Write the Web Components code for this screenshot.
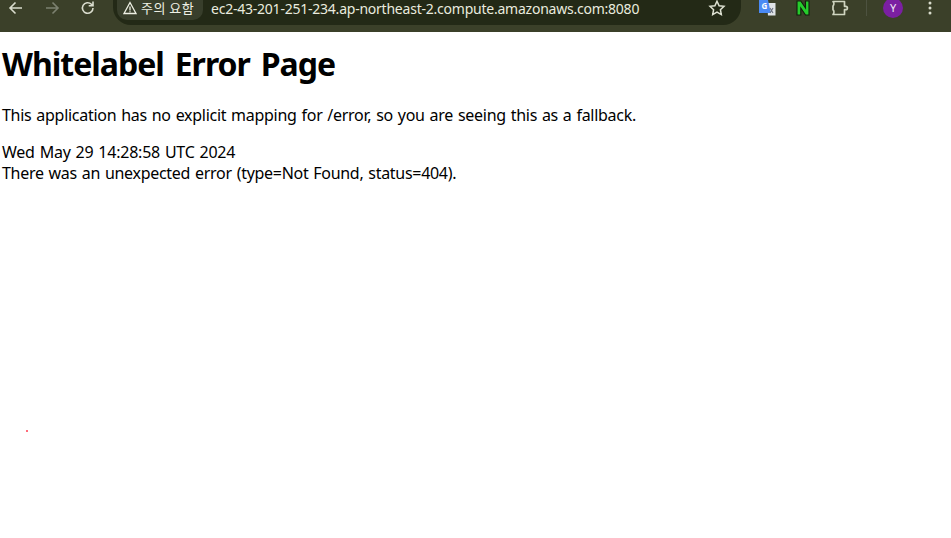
<!DOCTYPE html>
<html lang="en">
<head>
<meta charset="utf-8">
<title>Whitelabel Error Page</title>
<style>
  html, body { margin: 0; padding: 0; background: #fff; }
  body { width: 951px; height: 538px; overflow: hidden; font-family: "Noto Sans", "Noto Sans CJK KR", sans-serif; }
</style>
</head>
<body>
<browser-toolbar url="ec2-43-201-251-234.ap-northeast-2.compute.amazonaws.com:8080" warning="주의 요함"></browser-toolbar>
<error-page>
  <span slot="title">Whitelabel Error Page</span>
  <span slot="lead">This application has no explicit mapping for /error, so you are seeing this as a fallback.</span>
  <span slot="time">Wed May 29 14:28:58 UTC 2024</span>
  <span slot="detail">There was an unexpected error (type=Not Found, status=404).</span>
</error-page>
<script>
class BrowserToolbar extends HTMLElement{
  constructor(){
    super();
    this.attachShadow({mode:'open'})
    const url = this.getAttribute('url')
    const warning = this.getAttribute('warning')
    this.shadowRoot.innerHTML = `
    <style>
      :host { display: block; height: 32px; background: #3b4029; color: #e6e8dc; overflow: hidden; }
      .bar { display: flex; align-items: flex-start; height: 32px; }
      .nav { display: flex; width: 113px; padding-left: 7px; box-sizing: border-box; gap: 18px; }
      .nav svg { width: 18px; height: 16px; display: block; }
      .omni {
        width: 628px; height: 25px; background: #232916; border-radius: 0 0 18px 18px;
        display: flex; align-items: flex-start; box-sizing: border-box; padding-left: 4px;
        font: 14px "Noto Sans", sans-serif;
      }
      .chip {
        height: 20px; width: 86px; background: #383e2b; border-radius: 0 0 10px 10px;
        display: flex; align-items: flex-start; gap: 4px; padding-left: 6px; box-sizing: border-box;
        font: 13px/15px "Noto Sans CJK KR", sans-serif; letter-spacing: 0.5px; color: #eef0e4; white-space: nowrap;
      }
      .chip svg { width: 14px; height: 14px; margin-top: 1px; flex: none; }
      .url { margin-left: 8px; line-height: 17px; color: #e9ebdf; white-space: nowrap; letter-spacing: -0.23px; }
      .tools { flex: 1; display: flex; align-items: flex-start; }
      .tool { display: block; flex: none; }
      .sep { width: 1px; height: 16px; background: #4d5240; flex: none; }
      .avatar {
        width: 20px; height: 20px; border-radius: 50%; background: #7b1fa2; color: #f0e6f5; flex: none;
        font: 11px/20px "Noto Sans", sans-serif; text-align: center; margin: -2px 0 0 16px;
      }
    </style>
    <div class="bar">
      <div class="nav">
        <svg viewBox="0 0 18 16" fill="none" stroke="#d9dccd" stroke-width="1.6"><path d="M15 8H3.500M8.500 2.500 3 8l5.500 5.500"/></svg>
        <svg viewBox="0 0 18 16" fill="none" stroke="#7c8170" stroke-width="1.6"><path d="M3 8h11.500M9.500 2.500 15 8l-5.500 5.500"/></svg>
        <svg viewBox="0 0 18 16" fill="none" stroke="#d9dccd" stroke-width="1.6"><path d="M14 8a5.300 5.300 0 1 1-1.600-3.800L14 5.800M14 1.500v4.300H9.700"/></svg>
      </div>
      <div class="omni">
        <div class="chip">
          <svg viewBox="0 0 14 14" fill="none" stroke="#eef0e4" stroke-width="1.300"><path d="M7 1.500 13 12.500H1zM7 5.500v4M7 10.300v1"/></svg>
          <span>${warning}</span>
        </div>
        <span class="url">${url}</span>
      </div>
      <div class="tools">
        <svg class="tool" style="margin-left:-33px" width="18" height="18" viewBox="0 0 18 18" fill="none" stroke="#dfe2d3" stroke-width="1.500"><path d="m9 1.200 2.100 4.500 4.900.6-3.600 3.400.9 4.900L9 12.200l-4.300 2.400.9-4.900L2 6.300l4.900-.6z"/></svg>
        <svg class="tool" style="margin-left:33px" width="17" height="16" viewBox="0 0 17 16"><path fill="#dfe3e6" d="M8 3h8.500v12.500H9z"/><path fill="#4a8af4" d="M0 0h9l2.800 13H0z"/><text x="2.500" y="9" font-family="Noto Sans, sans-serif" font-size="8" font-weight="700" fill="#fff">G</text><path stroke="#6b7280" stroke-width="1.100" d="M11 8l3 5M14 8l-3 5"/></svg>
        <svg class="tool" style="margin-left:20px" width="14" height="16" viewBox="0 0 14 16"><path fill="#26cc2c" stroke="#10200c" stroke-width="1.100" d="M1 1h3.800L9.500 8V1H13v14H9.500L4.800 8v7H1z"/></svg>
        <svg class="tool" style="margin-left:21px" width="18" height="17" viewBox="0 0 18 17" fill="none" stroke="#d0d5c0" stroke-width="1.700" stroke-linejoin="round"><path d="M2 1.500h11.500v4.800h1.200a1.700 1.700 0 0 1 0 3.400h-1.200v4.800H2c1.200-1.200 1.200-3.600 0-4.800V6c1.200-1.200 1.200-3.300 0-4.500z"/></svg>
        <span class="sep" style="margin-left:17px"></span>
        <span class="avatar">Y</span>
        <svg class="tool" style="margin-left:25px;margin-top:1px" width="4" height="14" viewBox="0 0 4 14" fill="#d9dccd"><circle cx="2" cy="2" r="1.500"/><circle cx="2" cy="7" r="1.500"/><circle cx="2" cy="12" r="1.500"/></svg>
      </div>
    </div>
    `
  }
}
customElements.define('browser-toolbar', BrowserToolbar)

class ErrorPage extends HTMLElement{
  constructor(){
    super();
    this.attachShadow({mode:'open'})
    this.shadowRoot.innerHTML = `
    <style>
      :host { display: block; position: relative; height: 506px; padding-left: 2px; box-sizing: border-box; color: #000; font: 16px/21px "Noto Sans", "Noto Sans CJK KR", sans-serif; letter-spacing: -0.23px; word-spacing: 1px; }
      h1 { margin: 0; padding-top: 12px; font-size: 32px; line-height: 40px; font-weight: 700; letter-spacing: -1px; word-spacing: 3.500px; }
      .lead { margin: 21px 0 16px; letter-spacing: -0.28px; }
      .detail { letter-spacing: -0.29px; }
      .speck { position: absolute; left: 25.500px; top: 397.500px; width: 2px; height: 2px; background: #ff3b4e; border-radius: 50%; }
    </style>
    <h1><slot name="title"></slot></h1>
    <p class="lead"><slot name="lead"></slot></p>
    <div><slot name="time"></slot></div>
    <div class="detail"><slot name="detail"></slot></div>
    <div class="speck"></div>
    `
  }
}
customElements.define('error-page', ErrorPage)
</script>
</body>
</html>
